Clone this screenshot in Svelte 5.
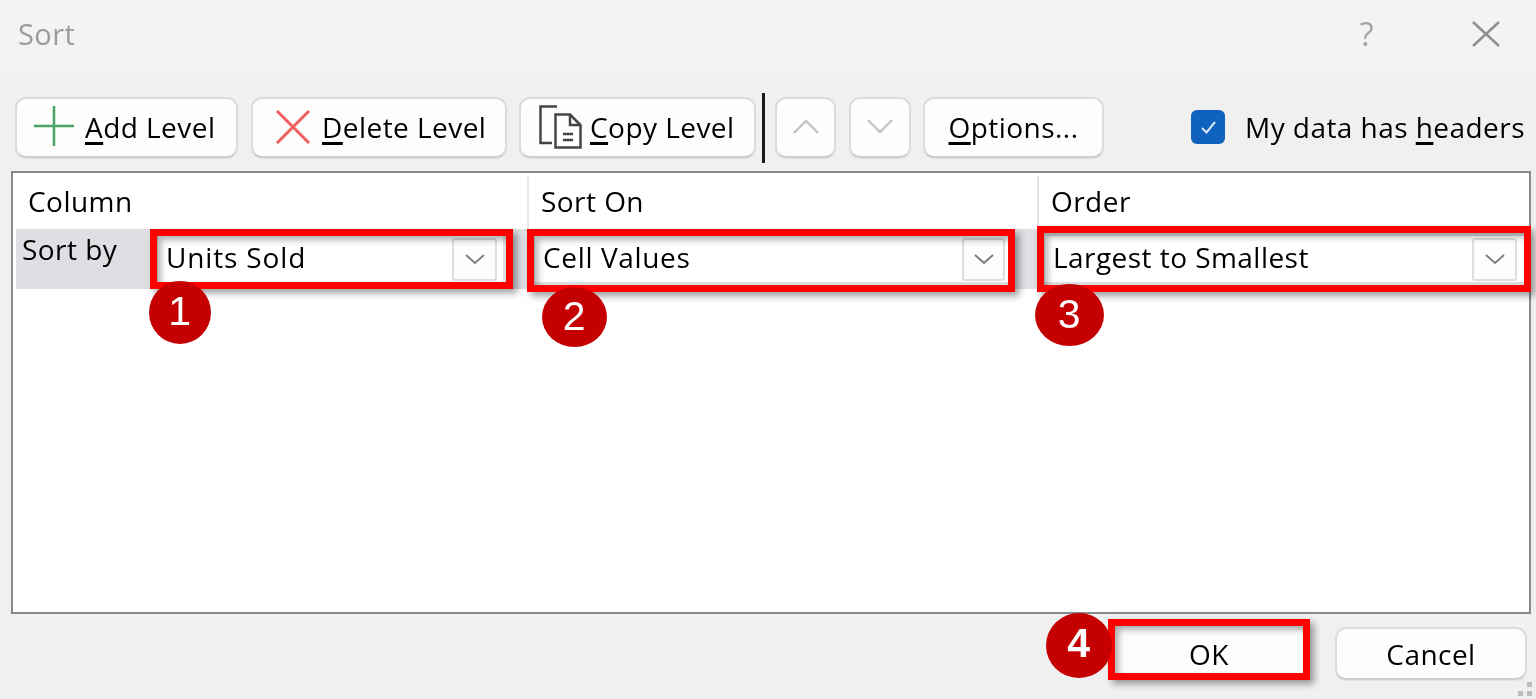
<script>
  const columns = ['Column', 'Sort On', 'Order'];
  const combos = [
    { text: 'Units Sold', cls: 'c1' },
    { text: 'Cell Values', cls: 'c2' },
    { text: 'Largest to Smallest', cls: 'c3' }
  ];
  const marks = [
    { n: '1', cls: 'b1' },
    { n: '2', cls: 'b2' },
    { n: '3', cls: 'b3' },
    { n: '4', cls: 'b4' }
  ];
</script>

<div class="dialog">
  <header class="title">
    <span class="name">Sort</span>
    <span class="help">?</span>
    <svg class="close" viewBox="0 0 28 26" aria-hidden="true"><path d="M1 1L27 25M27 1L1 25" /></svg>
  </header>

  <div class="toolbar">
    <button class="btn add">
      <svg class="ico plus" viewBox="0 0 40 40" aria-hidden="true"><path d="M0 20H40M20 0V40" /></svg>
      <span><u>A</u>dd Level</span>
    </button>
    <button class="btn del">
      <svg class="ico cross" viewBox="0 0 34 34" aria-hidden="true"><path d="M1 1L33 33M33 1L1 33" /></svg>
      <span><u>D</u>elete Level</span>
    </button>
    <button class="btn copy">
      <svg class="ico pages" viewBox="0 0 44 44" aria-hidden="true">
        <path d="M18 1.5H1.5V38H13" />
        <path d="M18 9.5H31L41.5 20V42.5H16.500V9.500Z" />
        <path d="M31 9.500V20H41.5M24 29H34M24 35H34" />
      </svg>
      <span><u>C</u>opy Level</span>
    </button>
    <i class="sep"></i>
    <button class="btn arrow up" aria-label="Move up">
      <svg viewBox="0 0 30 16" aria-hidden="true"><path d="M2 15L15 2L28 15" /></svg>
    </button>
    <button class="btn arrow down" aria-label="Move down">
      <svg viewBox="0 0 30 16" aria-hidden="true"><path d="M2 1L15 14L28 1" /></svg>
    </button>
    <button class="btn opts"><span><u>O</u>ptions...</span></button>
    <label class="check">
      <span class="box">
        <svg viewBox="0 0 34 34" aria-hidden="true"><path d="M11 18L15.500 22.500L24 12" /></svg>
      </span>
      <span>My data has <u>h</u>eaders</span>
    </label>
  </div>

  <section class="list">
    <div class="heads">
      {#each columns as c}
        <div class="head">{c}</div>
      {/each}
    </div>
    <div class="row">
      {#each combos as c, i}
        <div class="cell {c.cls}">
          {#if i === 0}<span class="by">Sort by</span>{/if}
          <div class="combo">
            <span class="val">{c.text}</span>
            <span class="drop">
              <svg viewBox="0 0 20 10" aria-hidden="true"><path d="M1 1L10 9L19 1" /></svg>
            </span>
          </div>
        </div>
      {/each}
    </div>
  </section>

  <footer class="foot">
    <button class="btn ok">OK</button>
    <button class="btn cancel">Cancel</button>
  </footer>

  <i class="grip"></i>

  <i class="mark m1"></i>
  <i class="mark m2"></i>
  <i class="mark m3"></i>
  <i class="mark m4"></i>
  {#each marks as m}
    <b class="badge {m.cls}">{m.n}</b>
  {/each}
</div>

<style>
  :global(body) {
    margin: 0;
    background: #f0f0f0;
  }
  .dialog {
    position: relative;
    width: 1536px;
    height: 699px;
    overflow: hidden;
    display: flex;
    flex-direction: column;
    background: #f0f0f0;
    font-family: "Open Sans", "Noto Sans", sans-serif;
    font-size: 28px;
    letter-spacing: 0.45px;
    color: #000;
    filter: blur(0.4px);
  }
  .title {
    height: 73px;
    flex: none;
    display: flex;
    align-items: center;
    box-sizing: border-box;
    padding: 0 36px 6px 18px;
    background: #f3f3f3;
    color: #9b9b9b;
  }
  .name {
    font-size: 29px;
  }
  .help {
    margin-left: auto;
    margin-right: 98px;
    font-size: 32px;
    color: #a3a3a3;
  }
  .close {
    width: 28px;
    height: 26px;
    fill: none;
    stroke: #8f8f8f;
    stroke-width: 2.500;
  }
  .toolbar {
    display: flex;
    align-items: center;
    height: 61px;
    margin-top: 24px;
    padding-left: 15px;
    flex: none;
  }
  .btn {
    box-sizing: border-box;
    height: 61px;
    padding: 0 0 2px;
    display: flex;
    align-items: center;
    justify-content: center;
    border: 2px solid #dcdcdc;
    border-bottom-color: #cfcfcf;
    border-radius: 11px;
    background: #fdfdfd;
    font: inherit;
    letter-spacing: inherit;
    color: inherit;
    box-shadow: 0 1px 1px rgba(0, 0, 0, 0.06);
  }
  .btn u, .check u {
    text-underline-offset: 4px;
    text-decoration-thickness: 2.500px;
  }
  .add { width: 223px; gap: 11px; justify-content: flex-start; padding-left: 17px; }
  .del { width: 256px; margin-left: 13px; gap: 12px; justify-content: flex-start; padding-left: 23px; }
  .copy { width: 237px; margin-left: 12px; gap: 7px; justify-content: flex-start; padding-left: 18px; }
  .ico { flex: none; fill: none; }
  .plus { width: 40px; height: 40px; stroke: #4aa564; stroke-width: 2.500; margin-top: -2px; }
  .cross { width: 34px; height: 34px; stroke: #f0605f; stroke-width: 3; }
  .pages { width: 44px; height: 44px; stroke: #444; stroke-width: 2.500; }
  .sep {
    width: 3px;
    height: 70px;
    margin-left: 6px;
    background: #1a1a1a;
  }
  .arrow { fill: none; }
  .arrow svg {
    width: 28px;
    height: 15px;
    fill: none;
    stroke: #c4c4c4;
    stroke-width: 2.500;
  }
  .up { width: 61px; margin-left: 10px; }
  .down { width: 62px; margin-left: 13px; }
  .opts { width: 181px; margin-left: 12px; }
  .check {
    margin-left: 87px;
    display: flex;
    align-items: center;
    gap: 20px;
    white-space: nowrap;
    padding-bottom: 1px;
  }
  .box {
    width: 34px;
    height: 34px;
    border-radius: 6px;
    background: #0f62bd;
    flex: none;
  }
  .box svg {
    display: block;
    fill: none;
    stroke: #d8e6f5;
    stroke-width: 2;
  }
  .list {
    box-sizing: border-box;
    width: 1520px;
    height: 443px;
    margin: 13px 0 0 11px;
    padding: 3px;
    flex: none;
    border: 2px solid #858a91;
    background: #fff;
  }
  .heads, .row {
    display: grid;
    grid-template-columns: 511px 510px 1fr;
  }
  .heads { height: 53px; }
  .head {
    padding-left: 12px;
    line-height: 50px;
    border-left: 2px solid #e6e6e6;
    box-sizing: border-box;
  }
  .head:first-child { border-left: 0; }
  .row {
    height: 60px;
    background: #dedee3;
  }
  .cell {
    display: flex;
    align-items: center;
    min-width: 0;
  }
  .c1 { padding: 7px 22px 7px 6px; }
  .c2 { padding: 7px 25px 7px 8px; }
  .c3 { padding: 7px 2px 7px 8px; }
  .c1 .combo { border-right: 2px solid #e2e2e2; padding-right: 6px; }
  .c1 .val { letter-spacing: 0.85px; }
  .c2 .val { letter-spacing: 0.65px; }
  .c2 .drop { width: 43px; }
  .by {
    align-self: flex-start;
    width: 136px;
    flex: none;
    line-height: 26px;
    white-space: nowrap;
  }
  .combo {
    flex: 1;
    height: 100%;
    min-width: 0;
    display: flex;
    align-items: center;
    justify-content: space-between;
    box-sizing: border-box;
    padding: 0 7px 0 8px;
    background: #fff;
    white-space: nowrap;
  }
  .val { padding-bottom: 4px; }
  .drop {
    box-sizing: border-box;
    width: 45px;
    height: 43px;
    display: flex;
    align-items: center;
    justify-content: center;
    border: 2px solid #dedede;
    border-radius: 3px;
    background: #fdfdfd;
  }
  .drop svg {
    width: 20px;
    height: 10px;
    fill: none;
    stroke: #7a7a7a;
    stroke-width: 1.800;
  }
  .foot {
    display: flex;
    justify-content: flex-end;
    gap: 31px;
    padding: 13px 9px 0 0;
  }
  .ok, .cancel { height: 53px; padding-bottom: 0; }
  .ok { width: 190px; border-color: transparent; box-shadow: none; }
  .cancel { width: 192px; }
  .grip {
    position: absolute;
    right: 4px;
    bottom: 3px;
    width: 14px;
    height: 14px;
    background:
      linear-gradient(#bdbdbd, #bdbdbd) 9px 0 / 5px 5px no-repeat,
      linear-gradient(#bdbdbd, #bdbdbd) 0 9px / 5px 5px no-repeat,
      linear-gradient(#bdbdbd, #bdbdbd) 9px 9px / 5px 5px no-repeat;
  }
  .mark {
    position: absolute;
    box-sizing: border-box;
    border: 7px solid #fe0000;
    box-shadow:
      4px 4px 7px rgba(0, 0, 0, 0.38),
      inset 4px 4px 6px rgba(0, 0, 0, 0.3);
  }
  .m1 { left: 150px; top: 229px; width: 363px; height: 60px; }
  .m2 { left: 527px; top: 229px; width: 488px; height: 63px; }
  .m3 { left: 1037px; top: 226px; width: 494px; height: 66px; }
  .m4 { left: 1108px; top: 619px; width: 202px; height: 61px; }
  .badge {
    position: absolute;
    box-sizing: border-box;
    display: flex;
    align-items: center;
    justify-content: center;
    border-radius: 50%;
    background: #c50000;
    color: #fff;
    font-family: "Liberation Sans", sans-serif;
    font-size: 41px;
    font-weight: 400;
    padding-bottom: 2px;
  }
  .b1 { left: 149px; top: 281px; width: 62px; height: 63px; }
  .b2 { left: 542px; top: 287px; width: 65px; height: 60px; }
  .b3 { left: 1035px; top: 284px; width: 69px; height: 62px; }
  .b4 { left: 1046px; top: 613px; width: 66px; height: 65px; font-weight: 700; padding-bottom: 4px; }
</style>
